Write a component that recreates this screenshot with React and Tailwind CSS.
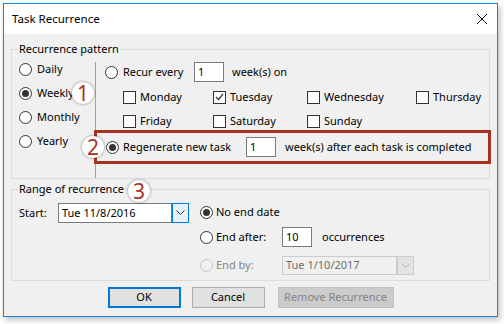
import React from 'react';

const Radio = ({ checked, disabled }) => (
  <span
    className={`w-[13px] h-[13px] rounded-full border flex items-center justify-center shrink-0 ${
      disabled ? 'border-[#c8c8c8] bg-[#f0f0f0]' : 'border-[#333333] bg-white'
    }`}
  >
    {checked && <span className="w-[7px] h-[7px] rounded-full bg-[#333333]" />}
  </span>
);

const Check = ({ label, checked }) => (
  <div className="flex items-center h-[20px] gap-[4px]">
    <span className="w-[13px] h-[13px] border border-[#333333] bg-white flex items-center justify-center shrink-0">
      {checked && (
        <svg width="9" height="8" viewBox="0 0 9 8">
          <path d="M1 4 L3.5 6.5 L8 1" fill="none" stroke="#333" strokeWidth="1.2" />
        </svg>
      )}
    </span>
    <span>{label}</span>
  </div>
);

const Chevron = ({ color = '#333' }) => (
  <svg width="9" height="6" viewBox="0 0 9 6">
    <path d="M0.5 0.5 L4.5 4.5 L8.5 0.5" fill="none" stroke={color} strokeWidth="1" />
  </svg>
);

const Badge = ({ n, className }) => (
  <div
    className={`absolute w-[22px] h-[22px] rounded-full bg-white shadow-[0_0_3px_rgba(0,0,0,0.45)] flex items-center justify-center text-[21px] leading-none text-[#a93226] ${className}`}
  >
    {n}
  </div>
);

export default function App() {
  return (
    <div className="w-[504px] h-[324px] bg-white pl-[3px] pt-[3px] font-['Noto_Sans',sans-serif] text-[11px] text-black whitespace-nowrap">
      <div className="w-[495px] h-[314px] border border-[#1883d7] bg-[#f0f0f0] shadow-[2px_3px_6px_rgba(0,0,0,0.25)] flex flex-col">
        {/* title bar */}
        <div className="h-[30px] bg-white flex items-center justify-between pl-[8px] pr-[10px] shrink-0">
          <span className="text-[11.5px]">Task Recurrence</span>
          <svg width="10" height="10" viewBox="0 0 10 10">
            <path d="M0 0 L10 10 M10 0 L0 10" stroke="#111" strokeWidth="1" />
          </svg>
        </div>

        <div className="px-[7px] pt-[15px]">
          {/* Recurrence pattern */}
          <div className="relative h-[130px] border border-[#dcdcdc] flex">
            <span className="absolute -top-[9px] left-[6px] px-[1px] bg-[#f0f0f0]">Recurrence pattern</span>
            <Badge n="1" className="left-[60px] top-[32px]" />

            <div className="w-[83px] pl-[7px] pt-[7px] flex flex-col">
              {['Daily', 'Weekly', 'Monthly', 'Yearly'].map((f) => (
                <div key={f} className="h-[24px] flex items-center gap-[5px]">
                  <Radio checked={f === 'Weekly'} />
                  <span>{f}</span>
                </div>
              ))}
            </div>

            <div className="flex-1 mt-[12px] border-l border-[#a0a0a0] flex flex-col">
              <div className="h-[20px] flex items-center pl-[9px]">
                <Radio />
                <span className="ml-[5px] w-[71px]">Recur every</span>
                <span className="w-[30px] h-[20px] border border-[#7a7a7a] bg-white pl-[3px] flex items-center">1</span>
                <span className="ml-[8px]">week(s) on</span>
              </div>

              <div className="mt-[5px] pl-[27px] grid grid-cols-[90px_94px_109px_auto] gap-y-[4px]">
                <Check label="Monday" />
                <Check label="Tuesday" checked />
                <Check label="Wednesday" />
                <Check label="Thursday" />
                <Check label="Friday" />
                <Check label="Saturday" />
                <Check label="Sunday" />
              </div>

              <div className="relative mt-[-1px] -ml-[2px] -mr-[2px] h-[34px] border-[3px] border-[#a83220] flex items-center pl-[9px]">
                <Badge n="2" className="-left-[15px] top-[3px]" />
                <Radio checked />
                <span className="ml-[4px] w-[123px]">Regenerate new task</span>
                <span className="w-[30px] h-[20px] border border-[#7a7a7a] bg-white pl-[3px] flex items-center">1</span>
                <span className="ml-[9px]">week(s) after each task is completed</span>
              </div>
            </div>
          </div>

          {/* Range of recurrence */}
          <div className="relative mt-[10px] h-[92px] border border-[#dcdcdc] flex items-start">
            <span className="absolute -top-[9px] left-[6px] px-[1px] bg-[#f0f0f0]">Range of recurrence</span>
            <Badge n="3" className="left-[116px] -top-[10px]" />

            <div className="pl-[7px] pt-[13px] flex items-center">
              <span className="w-[39px]">Start:</span>
              <div className="flex h-[20px]">
                <span className="w-[114px] border border-[#7a7a7a] bg-white pl-[3px] flex items-center">Tue 11/8/2016</span>
                <span className="w-[17px] border border-[#0078d7] bg-[#e5f1fb] flex items-center justify-center">
                  <Chevron />
                </span>
              </div>
            </div>

            <div className="ml-[11px] pt-[12px] flex flex-col">
              <div className="h-[20px] flex items-center gap-[3px]">
                <Radio checked />
                <span>No end date</span>
              </div>
              <div className="mt-[5px] h-[20px] flex items-center">
                <Radio />
                <span className="ml-[3px] w-[66px]">End after:</span>
                <span className="w-[30px] h-[20px] border border-[#7a7a7a] bg-white pl-[3px] flex items-center">10</span>
                <span className="ml-[10px]">occurrences</span>
              </div>
              <div className="mt-[9px] h-[19px] flex items-center">
                <Radio disabled />
                <span className="ml-[3px] w-[66px] text-[#838383]">End by:</span>
                <div className="flex h-[19px]">
                  <span className="w-[115px] border border-[#cccccc] bg-[#f0f0f0] pl-[3px] flex items-center text-[#6d6d6d]">
                    Tue 1/10/2017
                  </span>
                  <span className="w-[17px] border border-[#cccccc] bg-[#e3e3e3] flex items-center justify-center">
                    <Chevron color="#b5b5b5" />
                  </span>
                </div>
              </div>
            </div>
          </div>

          {/* buttons */}
          <div className="mt-[6px] flex justify-center">
            <button className="w-[73px] h-[21px] border-2 border-[#0078d7] bg-[#e1e1e1] flex items-center justify-center">OK</button>
            <button className="ml-[11px] w-[73px] h-[21px] border border-[#adadad] bg-[#e1e1e1] flex items-center justify-center">Cancel</button>
            <button className="ml-[13px] w-[116px] h-[21px] border border-[#bfbfbf] bg-[#cccccc] text-[#838383] flex items-center justify-center">
              Remove Recurrence
            </button>
          </div>
        </div>
      </div>
    </div>
  );
}
